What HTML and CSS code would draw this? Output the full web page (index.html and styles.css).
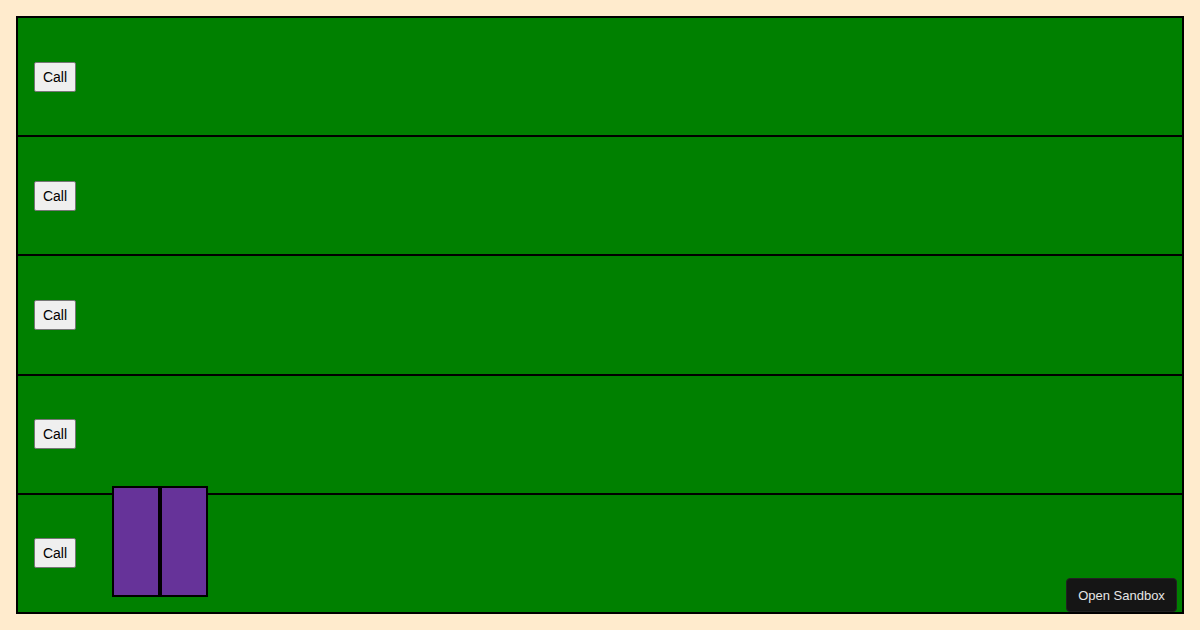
FILE: index.html
```html
<!DOCTYPE html>
<html>
<head>
<meta charset="utf-8">
<link rel="stylesheet" href="styles.css">
</head>
<body>
<div class="frame">
  <div class="row"><button class="call">Call</button></div>
  <div class="row"><button class="call">Call</button></div>
  <div class="row"><button class="call">Call</button></div>
  <div class="row"><button class="call">Call</button></div>
  <div class="row"><button class="call">Call</button></div>
  <div class="stack">
    <div class="block"></div>
    <div class="block"></div>
  </div>
</div>
<button class="sandbox">Open Sandbox</button>
</body>
</html>
```
FILE: styles.css
```css
html, body {
  margin: 0;
  padding: 0;
}
body {
  background: #ffebcd;
  width: 1200px;
  height: 630px;
  overflow: hidden;
  font-family: "Liberation Sans", Arial, sans-serif;
}
.frame {
  position: relative;
  box-sizing: border-box;
  margin: 16px;
  height: 598px;
  border: 1px solid #000;
  display: flex;
  flex-direction: column;
}
.row {
  flex: 1 1 0;
  box-sizing: border-box;
  border: 1px solid #000;
  background: #008000;
  display: flex;
  align-items: center;
  padding-left: 16px;
}
.call {
  font-family: "Liberation Sans", Arial, sans-serif;
  font-size: 14px;
  line-height: 16px;
  width: 42px;
  padding: 6px 0;
  border: 1px solid #767676;
  border-radius: 2px;
  background: #efefef;
  color: #000;
  margin: 0;
}
.stack {
  position: absolute;
  left: 95px;
  top: 469px;
  display: flex;
}
.block {
  width: 44px;
  height: 107px;
  border: 2px solid #000;
  background: #663399;
}
.sandbox {
  position: fixed;
  right: 23px;
  bottom: 18px;
  width: 111px;
  height: 34px;
  margin: 0;
  padding: 0;
  border: 1px solid #222;
  border-radius: 4px;
  background: #151515;
  color: #e6e6e6;
  font-family: "Liberation Sans", Arial, sans-serif;
  font-size: 13px;
}
```
